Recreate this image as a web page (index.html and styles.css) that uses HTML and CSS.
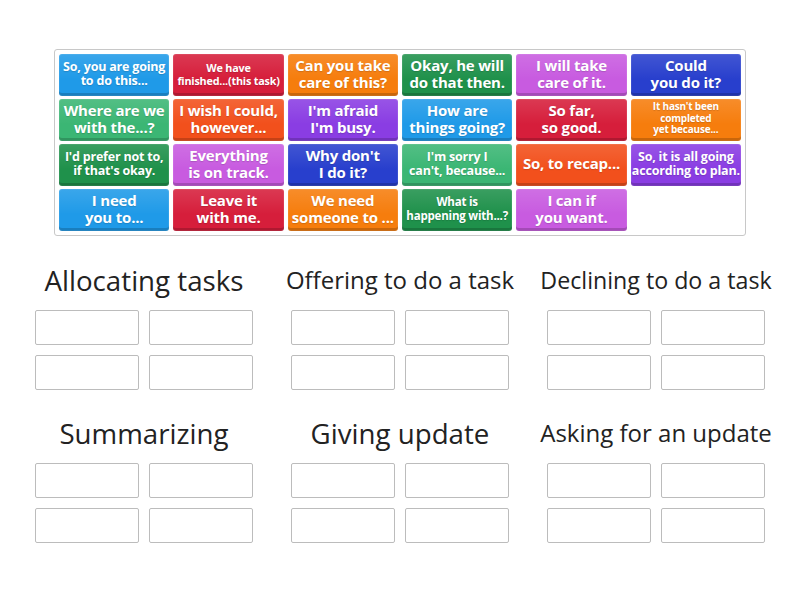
FILE: index.html
```html
<!DOCTYPE html>
<html lang="en">
<head>
  <meta charset="UTF-8" />
  <title>Group sort - Managing tasks</title>
  <link rel="stylesheet" href="styles.css">
</head>
<body>

  <div id="pool">
    <div class="card blue small">So, you are going<br>to do this...</div>
    <div class="card red fine">We have<br>finished...(this task)</div>
    <div class="card orange">Can you take<br>care of this?</div>
    <div class="card green">Okay, he will<br>do that then.</div>
    <div class="card pink">I will take<br>care of it.</div>
    <div class="card navy">Could<br>you do it?</div>

    <div class="card teal">Where are we<br>with the...?</div>
    <div class="card flame">I wish I could,<br>however...</div>
    <div class="card purple">I'm afraid<br>I'm busy.</div>
    <div class="card blue">How are<br>things going?</div>
    <div class="card red">So far,<br>so good.</div>
    <div class="card orange mini">It hasn't been<br>completed<br>yet because...</div>

    <div class="card green small">I'd prefer not to,<br>if that's okay.</div>
    <div class="card pink">Everything<br>is on track.</div>
    <div class="card navy">Why don't<br>I do it?</div>
    <div class="card teal small">I'm sorry I<br>can't, because...</div>
    <div class="card flame">So, to recap...</div>
    <div class="card purple small">So, it is all going<br>according to plan.</div>

    <div class="card blue">I need<br>you to...</div>
    <div class="card red">Leave it<br>with me.</div>
    <div class="card orange">We need<br>someone to ...</div>
    <div class="card green tiny">What is<br>happening with...?</div>
    <div class="card pink">I can if<br>you want.</div>
  </div>

  <div id="groups">
    <div class="group">
      <h2 class="fit-l">Allocating tasks</h2>
      <div class="slots"><div class="slot"></div><div class="slot"></div><div class="slot"></div><div class="slot"></div></div>
    </div>
    <div class="group">
      <h2>Offering to do a task</h2>
      <div class="slots"><div class="slot"></div><div class="slot"></div><div class="slot"></div><div class="slot"></div></div>
    </div>
    <div class="group">
      <h2 class="fit-s">Declining to do a task</h2>
      <div class="slots"><div class="slot"></div><div class="slot"></div><div class="slot"></div><div class="slot"></div></div>
    </div>
    <div class="group">
      <h2 class="fit-l">Summarizing</h2>
      <div class="slots"><div class="slot"></div><div class="slot"></div><div class="slot"></div><div class="slot"></div></div>
    </div>
    <div class="group">
      <h2 class="fit-l">Giving update</h2>
      <div class="slots"><div class="slot"></div><div class="slot"></div><div class="slot"></div><div class="slot"></div></div>
    </div>
    <div class="group">
      <h2>Asking for an update</h2>
      <div class="slots"><div class="slot"></div><div class="slot"></div><div class="slot"></div><div class="slot"></div></div>
    </div>
  </div>

</body>
</html>
```

FILE: styles.css
```css
body {
  margin: 0;
  background-color: #ffffff;
  font-family: "Open Sans", "Liberation Sans", sans-serif;
  color: #222222;
}
#pool {
  display: grid;
  grid-template-columns: repeat(6, 1fr);
  grid-auto-rows: 42px;
  gap: 3px 4px;
  width: 682px;
  margin: 49px 0 0 54px;
  padding: 4px;
  border: 1px solid #c8c8c8;
  border-radius: 3px;
}
.card {
  display: flex;
  align-items: center;
  justify-content: center;
  padding-bottom: 3px;
  text-align: center;
  color: #ffffff;
  font-weight: 700;
  font-size: 15px;
  line-height: 17px;
  letter-spacing: -0.2px;
  border-radius: 3px;
  white-space: nowrap;
  overflow: hidden;
  background-image: linear-gradient(rgba(255, 255, 255, 0.12), rgba(255, 255, 255, 0) 60%);
  box-shadow: inset 0 -3px 0 rgba(0, 0, 0, 0.18), inset 0 0 0 1px rgba(255, 255, 255, 0.08);
  text-shadow: 0 1px 1px rgba(0, 0, 0, 0.15);
}
.card.small {
  font-size: 12.5px;
  line-height: 14px;
}
.card.tiny {
  font-size: 11.5px;
  line-height: 14px;
}
.card.fine {
  font-size: 10.8px;
  line-height: 13px;
}
.card.mini {
  font-size: 10px;
  line-height: 11.5px;
}
.blue { background-color: #1f9ae8; }
.red { background-color: #d61e3b; }
.orange { background-color: #f67d0d; }
.green { background-color: #1f914b; }
.pink { background-color: #c85be0; }
.navy { background-color: #283fcd; }
.teal { background-color: #3bb674; }
.flame { background-color: #f2501c; }
.purple { background-color: #8a3de3; }

#groups {
  display: grid;
  grid-template-columns: repeat(3, 218px);
  justify-content: center;
  column-gap: 38px;
  row-gap: 27px;
  margin-top: 28px;
}
.group h2 {
  margin: 0 -20px 14px;
  height: 32px;
  line-height: 32px;
  font-size: 24px;
  font-weight: 400;
  text-align: center;
  white-space: nowrap;
}
.group h2.fit-l {
  font-size: 27.7px;
}
.group h2.fit-s {
  font-size: 23.2px;
}
.slots {
  display: grid;
  grid-template-columns: repeat(2, 104px);
  grid-auto-rows: 35px;
  gap: 10px;
}
.slot {
  border: 1px solid #bcbcbc;
  border-radius: 2px;
}
```
